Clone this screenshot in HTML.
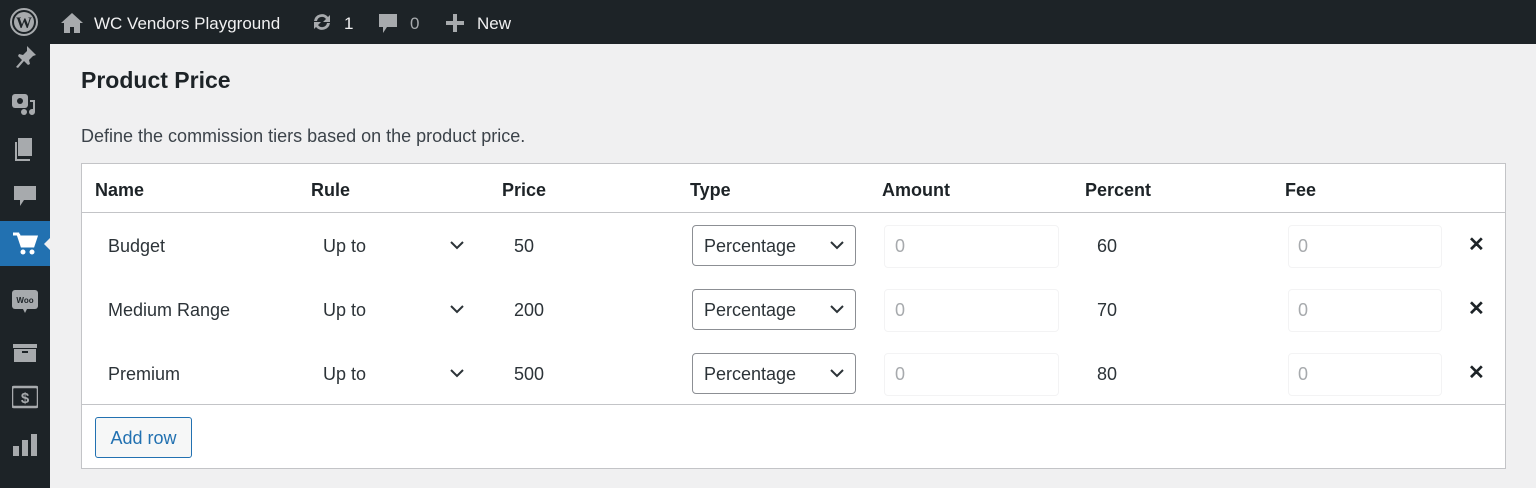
<!DOCTYPE html>
<html><head><style>
*{box-sizing:border-box;margin:0;padding:0}
body{width:1536px;height:488px;overflow:hidden;background:#f0f0f1;font-family:"Liberation Sans",sans-serif;color:#1d2327;position:relative}
.bar{position:absolute;left:0;top:0;width:1536px;height:44px;background:#1d2327;color:#f0f0f1;font-size:17px}
.bar span{position:absolute;top:14px}
.side{position:absolute;left:0;top:44px;width:50px;height:444px;background:#1d2327}
.ic{position:absolute;left:12px;width:26px;height:26px;fill:#a7aaad}
.t{position:absolute;font-size:18px;white-space:nowrap}
.box{position:absolute;left:81px;top:163px;width:1425px;height:306px;background:#fff;border:1px solid #c3c4c7}
.sel{position:absolute;width:164px;height:41px;border:1px solid #8c8f94;border-radius:4px;background:#fff}
.inp{position:absolute;height:43px;border:1px solid #f3f3f4;border-radius:4px}
.ph{color:#a7aaad}
</style></head><body>
<div class="bar">
<svg style="position:absolute;left:9px;top:7px" width="30" height="30" viewBox="0 0 30 30"><circle cx="15" cy="15" r="13" fill="none" stroke="#a7aaad" stroke-width="2"/><circle cx="15" cy="15" r="10" fill="#a7aaad"/><text x="15" y="21" font-size="16" font-weight="bold" text-anchor="middle" fill="#1d2327" font-family="Liberation Serif">W</text></svg>
<svg style="position:absolute;left:60px;top:12px" width="24" height="22" viewBox="0 0 24 22"><path d="M12 1L1 11h3v10h6v-6h4v6h6V11h3z" fill="#a7aaad"/></svg>
<span style="left:94px">WC Vendors Playground</span>
<svg style="position:absolute;left:310px;top:11px" width="24" height="22" viewBox="0 0 24 22"><path d="M4 10a8 8 0 0 1 14-4l2-2v7h-7l3-3a5 5 0 0 0-9 2zM20 12a8 8 0 0 1-14 4l-2 2v-7h7l-3 3a5 5 0 0 0 9-2z" fill="#a7aaad"/></svg>
<span style="left:344px">1</span>
<svg style="position:absolute;left:377px;top:13px" width="22" height="22" viewBox="0 0 22 22"><path d="M2 1h18v13H10l-4 6v-6H2z" fill="#a7aaad"/></svg>
<span style="left:410px;color:#a7aaad">0</span>
<svg style="position:absolute;left:445px;top:13px" width="20" height="20" viewBox="0 0 20 20"><path d="M8 1h4v7h7v4h-7v7H8v-7H1V8h7z" fill="#a7aaad"/></svg>
<span style="left:477px">New</span>
</div>
<div class="side">
<svg class="ic" style="top:0" viewBox="0 0 26 26"><path d="M15 2l9 9-3 1-4 4 1 4-2 1-4-4-6 7-2-1 6-7-4-4 1-2 4 1 4-4z"/></svg>
<svg class="ic" style="top:46px" viewBox="0 0 26 26"><rect x="0" y="4" width="16" height="14" rx="3"/><circle cx="8" cy="11" r="3" fill="#1d2327"/><path d="M18 10h5v12a3 3 0 1 1-3-3h1v-7h-3z"/><circle cx="12" cy="22" r="3"/></svg>
<svg class="ic" style="top:92px" viewBox="0 0 26 26"><path d="M6 2h14v18H6z"/><path d="M3 6h2v17h13v2H3z"/></svg>
<svg class="ic" style="top:139px" viewBox="0 0 26 26"><path d="M2 3h22v14H12l-4 6v-6H2z"/></svg>
<div style="position:absolute;left:0;top:177px;width:50px;height:45px;background:#2271b1"></div>
<div style="position:absolute;left:44px;top:193px;border:7px solid transparent;border-right-color:#f0f0f1;border-left:0"></div>
<svg class="ic" style="top:187px;fill:#fff" viewBox="0 0 26 26"><path d="M1 3h5l4 12h11l3-9H9l-1-3"/><path d="M1 3h5l4 12h11l3-9H8" fill="none" stroke="#fff" stroke-width="3"/><circle cx="11" cy="21" r="2.5"/><circle cx="20" cy="21" r="2.5"/></svg>
<svg class="ic" style="top:244px" viewBox="0 0 26 26"><rect x="0" y="2" width="26" height="19" rx="3"/><path d="M11 21l2 4 2-4z"/><text x="13" y="15" font-size="8" text-anchor="middle" fill="#1d2327" font-weight="bold">Woo</text></svg>
<svg class="ic" style="top:296px" viewBox="0 0 26 26"><rect x="1" y="4" width="24" height="4"/><rect x="2" y="9" width="22" height="13"/><rect x="10" y="11" width="6" height="2" fill="#1d2327"/></svg>
<svg class="ic" style="top:340px" viewBox="0 0 26 26"><rect x="0" y="3" width="26" height="20" rx="2" fill="none" stroke="#a7aaad" stroke-width="2.5"/><text x="13" y="19" font-size="15" font-weight="bold" text-anchor="middle">$</text></svg>
<svg class="ic" style="top:388px" viewBox="0 0 26 26"><rect x="1" y="14" width="6" height="10"/><rect x="10" y="8" width="6" height="16"/><rect x="19" y="2" width="6" height="22"/></svg>
</div>
<div class="t" style="left:81px;top:67px;font-size:23px;font-weight:bold">Product Price</div>
<div class="t" style="left:81px;top:126px;color:#3c434a">Define the commission tiers based on the product price.</div>
<div class="box">
<div style="position:absolute;left:0;top:48px;width:100%;border-top:1px solid #c3c4c7"></div>
<div style="position:absolute;left:0;top:240px;width:100%;border-top:1px solid #c3c4c7"></div>
<div class="t" style="left:13px;top:16px;font-weight:bold">Name</div>
<div class="t" style="left:229px;top:16px;font-weight:bold">Rule</div>
<div class="t" style="left:420px;top:16px;font-weight:bold">Price</div>
<div class="t" style="left:608px;top:16px;font-weight:bold">Type</div>
<div class="t" style="left:800px;top:16px;font-weight:bold">Amount</div>
<div class="t" style="left:1003px;top:16px;font-weight:bold">Percent</div>
<div class="t" style="left:1203px;top:16px;font-weight:bold">Fee</div>
<div style="position:absolute;left:13px;top:253px;width:97px;height:41px;border:1px solid #2271b1;border-radius:3px;background:#f6f7f7;color:#2271b1;font-size:18px;text-align:center;line-height:40px">Add row</div>
</div>
<div id="rows"></div>
<script>
var r=[["Budget","50","60"],["Medium Range","200","70"],["Premium","500","80"]],h="";
r.forEach(function(d,i){var y=246+i*64;
h+='<div class="t" style="left:108px;top:'+(y-10)+'px;color:#2c3338">'+d[0]+'</div>'+
'<div class="t" style="left:323px;top:'+(y-10)+'px;color:#2c3338">Up to</div>'+
'<svg style="position:absolute;left:450px;top:'+(y-5)+'px" width="14" height="9" viewBox="0 0 14 9"><path d="M1 1l6 6 6-6" fill="none" stroke="#2c3338" stroke-width="2"/></svg>'+
'<div class="t" style="left:514px;top:'+(y-10)+'px;color:#2c3338">'+d[1]+'</div>'+
'<div class="sel" style="left:692px;top:'+(y-21)+'px"></div>'+
'<div class="t" style="left:704px;top:'+(y-10)+'px;color:#2c3338">Percentage</div>'+
'<svg style="position:absolute;left:830px;top:'+(y-5)+'px" width="14" height="9" viewBox="0 0 14 9"><path d="M1 1l6 6 6-6" fill="none" stroke="#2c3338" stroke-width="2"/></svg>'+
'<div class="inp" style="left:884px;top:'+(y-21)+'px;width:175px"></div>'+
'<div class="t ph" style="left:895px;top:'+(y-10)+'px">0</div>'+
'<div class="t" style="left:1097px;top:'+(y-10)+'px;color:#2c3338">'+d[2]+'</div>'+
'<div class="inp" style="left:1288px;top:'+(y-21)+'px;width:154px"></div>'+
'<div class="t ph" style="left:1298px;top:'+(y-10)+'px">0</div>'+
'<div class="t" style="left:1468px;top:'+(y-14)+'px;font-weight:bold;font-size:20px">✕</div>';});
document.getElementById("rows").innerHTML=h;
</script>
</body></html>
